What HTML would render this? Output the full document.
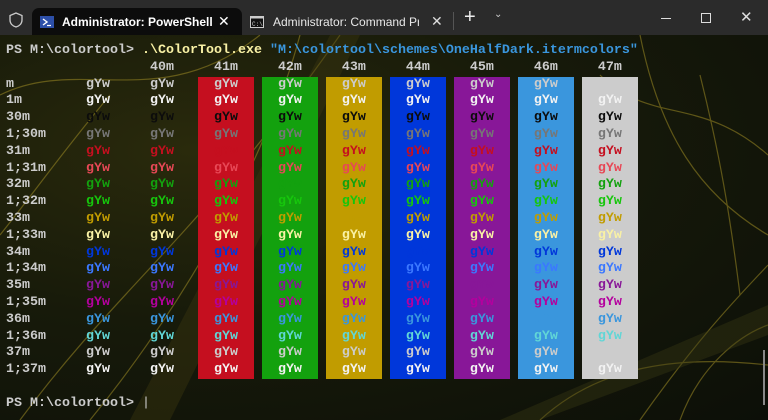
<!DOCTYPE html>
<html><head><meta charset="utf-8"><style>
html,body{margin:0;padding:0;width:768px;height:420px;overflow:hidden;background:#13160b;}
#bg{position:absolute;left:0;top:35px;width:768px;height:385px;background:radial-gradient(ellipse at 25% 30%,#2a2a0c 0%,#171a0a 45%,#0c0f08 100%);}
#tb{position:absolute;left:0;top:0;width:768px;height:35px;background:#2b2b2b;font-family:"Liberation Sans",sans-serif;font-size:12px;color:#fff;}
.tab{position:absolute;top:8px;height:27px;}
.blk{position:absolute;top:77px;height:302px;width:56px;}
pre{position:absolute;left:6px;top:43px;margin:0;font-family:"Liberation Mono",monospace;font-size:13.33px;line-height:16.8px;font-weight:bold;color:#cccccc;}
.l{color:#cccccc}
</style></head><body>
<div id="bg">
<svg width="768" height="385" style="position:absolute;left:0;top:0">
<g fill="none" stroke="#9c8a24" stroke-width="1.2" opacity="0.55">
<path d="M0 60 C80 20 160 80 260 0"/>
<path d="M20 385 C120 250 200 200 340 0"/>
<path d="M90 385 C160 300 260 150 300 0"/>
<path d="M640 385 C700 300 740 260 768 230"/>
<path d="M600 40 C650 90 700 60 768 120"/>
<path d="M680 385 C700 330 740 300 768 290"/>
<path d="M540 385 C600 330 680 320 768 330"/>
<path d="M0 200 C40 150 60 120 110 60"/>
<path d="M640 0 C660 100 700 160 768 200"/>
<path d="M700 40 C720 120 730 180 740 260"/>
</g>
<path d="M130 385 L330 0 L360 0 L170 385Z" fill="#3a3510" opacity="0.45"/>
<path d="M500 385 L768 270 L768 300 L540 385Z" fill="#3a3a14" opacity="0.4"/>
<rect x="763" y="315" width="2" height="55" fill="#888"/>
</svg>
</div>
<div id="tb">
<svg width="20" height="20" style="position:absolute;left:6px;top:10px" viewBox="0 0 20 20"><path d="M10 3 L16 5.5 V10 C16 13.5 13.5 16 10 17 C6.5 16 4 13.5 4 10 V5.5 Z" fill="none" stroke="#ccc" stroke-width="1.3"/></svg>
<div class="tab" style="left:32px;width:210px;background:#0c0c0c;border-radius:7px 7px 0 0;">
<svg width="14" height="12" style="position:absolute;left:8px;top:8px" viewBox="0 0 14 12"><rect x="0" y="0" width="14" height="12" fill="#2d4fa8"/><path d="M3 3 L7 6 L3 9" stroke="#fff" stroke-width="1.4" fill="none"/><path d="M7 9.5 H11" stroke="#fff" stroke-width="1.2"/></svg>
<span style="position:absolute;left:30px;top:7px;font-weight:bold;">Administrator: PowerShell</span>
<span style="position:absolute;left:186px;top:5px;font-size:14px;">✕</span>
</div>
<div class="tab" style="left:244px;width:210px;">
<svg width="14" height="12" style="position:absolute;left:6px;top:8px" viewBox="0 0 14 12"><rect x="0.5" y="0.5" width="13" height="11" fill="#111" stroke="#ccc"/><rect x="0.5" y="0.5" width="13" height="2" fill="#ccc"/><text x="2" y="10" font-size="6" fill="#ccc" font-family="Liberation Mono">C:\</text></svg>
<span style="position:absolute;left:29px;top:7px;color:#e8e8e8;white-space:nowrap;width:146px;overflow:hidden;">Administrator: Command Prompt</span>
<span style="position:absolute;left:187px;top:5px;font-size:14px;color:#ddd;">✕</span>
</div>
<div style="position:absolute;left:453px;top:12px;width:1px;height:18px;background:#555"></div>
<span style="position:absolute;left:464px;top:6px;font-size:20px;color:#eee;">+</span>
<span style="position:absolute;left:494px;top:9px;font-size:10px;color:#ccc;">⌄</span>
<div style="position:absolute;left:661px;top:18px;width:10px;height:1px;background:#ddd"></div>
<div style="position:absolute;left:701px;top:13px;width:8px;height:8px;border:1px solid #ddd"></div>
<span style="position:absolute;left:740px;top:8px;font-size:15px;color:#ddd;">✕</span>
</div>
<div class="blk" style="left:198px;background:#c50f1f"></div>
<div class="blk" style="left:262px;background:#13a10e"></div>
<div class="blk" style="left:326px;background:#c19c00"></div>
<div class="blk" style="left:390px;background:#0037da"></div>
<div class="blk" style="left:454px;background:#881798"></div>
<div class="blk" style="left:518px;background:#3a96dd"></div>
<div class="blk" style="left:582px;background:#cccccc"></div>
<pre>PS M:\colortool&gt; <span style="color:#f9f1a5">.\ColorTool.exe</span> <span style="color:#3a96dd">"M:\colortool\schemes\OneHalfDark.itermcolors"</span>
                  40m     41m     42m     43m     44m     45m     46m     47m
<span class="l">m         </span><span style="color:#cccccc">gYw     gYw     gYw     gYw     gYw     gYw     gYw     gYw     gYw</span>
<span class="l">1m        </span><span style="color:#f2f2f2">gYw     gYw     gYw     gYw     gYw     gYw     gYw     gYw     gYw</span>
<span class="l">30m       </span><span style="color:#0c0c0c">gYw     gYw     gYw     gYw     gYw     gYw     gYw     gYw     gYw</span>
<span class="l">1;30m     </span><span style="color:#767676">gYw     gYw     gYw     gYw     gYw     gYw     gYw     gYw     gYw</span>
<span class="l">31m       </span><span style="color:#c50f1f">gYw     gYw     gYw     gYw     gYw     gYw     gYw     gYw     gYw</span>
<span class="l">1;31m     </span><span style="color:#e74856">gYw     gYw     gYw     gYw     gYw     gYw     gYw     gYw     gYw</span>
<span class="l">32m       </span><span style="color:#13a10e">gYw     gYw     gYw     gYw     gYw     gYw     gYw     gYw     gYw</span>
<span class="l">1;32m     </span><span style="color:#16c60c">gYw     gYw     gYw     gYw     gYw     gYw     gYw     gYw     gYw</span>
<span class="l">33m       </span><span style="color:#c19c00">gYw     gYw     gYw     gYw     gYw     gYw     gYw     gYw     gYw</span>
<span class="l">1;33m     </span><span style="color:#f9f1a5">gYw     gYw     gYw     gYw     gYw     gYw     gYw     gYw     gYw</span>
<span class="l">34m       </span><span style="color:#0037da">gYw     gYw     gYw     gYw     gYw     gYw     gYw     gYw     gYw</span>
<span class="l">1;34m     </span><span style="color:#3b78ff">gYw     gYw     gYw     gYw     gYw     gYw     gYw     gYw     gYw</span>
<span class="l">35m       </span><span style="color:#881798">gYw     gYw     gYw     gYw     gYw     gYw     gYw     gYw     gYw</span>
<span class="l">1;35m     </span><span style="color:#b4009e">gYw     gYw     gYw     gYw     gYw     gYw     gYw     gYw     gYw</span>
<span class="l">36m       </span><span style="color:#3a96dd">gYw     gYw     gYw     gYw     gYw     gYw     gYw     gYw     gYw</span>
<span class="l">1;36m     </span><span style="color:#61d6d6">gYw     gYw     gYw     gYw     gYw     gYw     gYw     gYw     gYw</span>
<span class="l">37m       </span><span style="color:#cccccc">gYw     gYw     gYw     gYw     gYw     gYw     gYw     gYw     gYw</span>
<span class="l">1;37m     </span><span style="color:#f2f2f2">gYw     gYw     gYw     gYw     gYw     gYw     gYw     gYw     gYw</span>

PS M:\colortool&gt; <span style="font-weight:normal">|</span></pre>
</body></html>
